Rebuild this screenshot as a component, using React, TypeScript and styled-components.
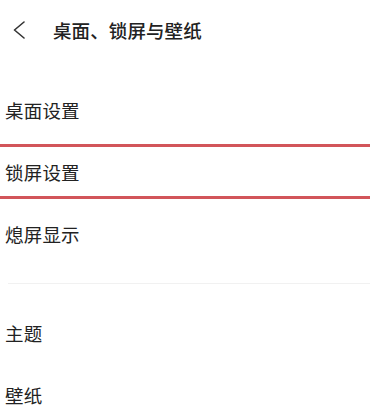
import styled, { createGlobalStyle } from "styled-components";

const GlobalStyle = createGlobalStyle`
  body {
    margin: 0;
    background: #ffffff;
    font-family: "Noto Sans CJK SC", "Noto Sans", sans-serif;
    color: #222222;
  }
`;

type Item = { label: string; highlighted?: boolean };

const groups: Item[][] = [
  [{ label: "桌面设置" }, { label: "锁屏设置", highlighted: true }, { label: "熄屏显示" }],
  [{ label: "主题" }, { label: "壁纸" }],
];

export default function App() {
  return (
    <Page>
      <GlobalStyle />
      <Header>
        <BackButton aria-label="返回">
          <svg width="14" height="18" viewBox="0 0 14 18" fill="none">
            <path
              d="M12 1 L2.5 9 L12 17"
              stroke="#333333"
              strokeWidth="1.6"
              strokeLinecap="round"
              strokeLinejoin="round"
            />
          </svg>
        </BackButton>
        <Title>桌面、锁屏与壁纸</Title>
      </Header>
      {groups.map((group, i) => (
        <Group key={i} $first={i === 0}>
          {group.map((item) => (
            <Row key={item.label} $highlighted={item.highlighted}>
              {item.label}
            </Row>
          ))}
        </Group>
      ))}
    </Page>
  );
}

const Page = styled.div`
  width: 370px;
  height: 414px;
  overflow: hidden;
  background: #ffffff;
`;

const Header = styled.div`
  display: flex;
  align-items: center;
  height: 60px;
  padding-left: 12px;
  gap: 27px;
`;

const BackButton = styled.button`
  display: flex;
  align-items: center;
  justify-content: center;
  width: 14px;
  height: 20px;
  padding: 0;
  border: none;
  background: none;
`;

const Title = styled.h1`
  margin: 0;
  font-size: 18.5px;
  font-weight: 500;
  color: #222222;
  letter-spacing: 0.1px;
`;

const Group = styled.div<{ $first: boolean }>`
  display: flex;
  flex-direction: column;
  margin-top: ${({ $first }) => ($first ? "19px" : "18px")};
  padding-top: ${({ $first }) => ($first ? "0" : "18px")};
  margin-left: ${({ $first }) => ($first ? "0" : "8px")};
  border-top: ${({ $first }) => ($first ? "none" : "1.5px solid #f1f1f1")};

  & > div {
    margin-left: ${({ $first }) => ($first ? "0" : "-8px")};
  }
`;

const Row = styled.div<{ $highlighted?: boolean }>`
  display: flex;
  align-items: center;
  height: ${({ $highlighted }) => ($highlighted ? "49px" : "62px")};
  margin: ${({ $highlighted }) => ($highlighted ? "3px 0 4px" : "0")};
  padding-left: 5px;
  font-size: 18.5px;
  letter-spacing: 0.2px;
  color: #222222;
  border-top: ${({ $highlighted }) => ($highlighted ? "3px solid #d2555a" : "none")};
  border-bottom: ${({ $highlighted }) => ($highlighted ? "3px solid #d2555a" : "none")};
`;
